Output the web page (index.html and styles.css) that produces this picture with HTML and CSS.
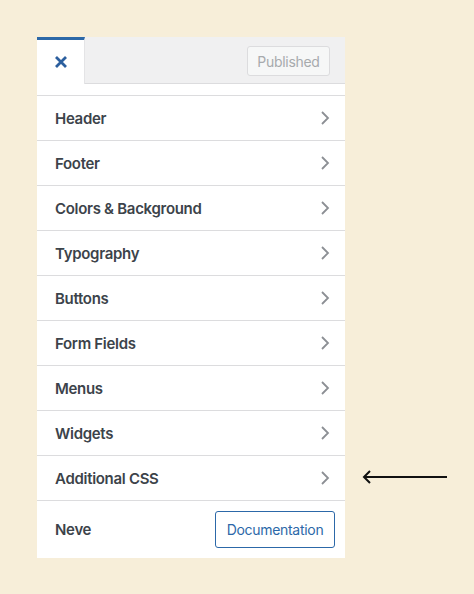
FILE: index.html
```html
<!DOCTYPE html>
<html>
<head>
<meta charset="utf-8">
<link rel="stylesheet" href="styles.css">
</head>
<body>
<div class="stage">
  <div class="panel">
    <div class="topbar">
      <div class="close-tab">
        <svg width="14" height="14" viewBox="0 0 14 14"><path d="M2 2 L12 12 M12 2 L2 12" stroke="#2c5f9e" stroke-width="2.8" stroke-linecap="butt"/></svg>
      </div>
      <div class="published">Published</div>
    </div>
    <div class="spacer"></div>
    <ul class="menu">
      <li class="item"><span>Header</span><svg class="chev" width="10" height="16" viewBox="0 0 10 16"><path d="M2 2 L8 8 L2 14" fill="none" stroke="#8c8f94" stroke-width="1.8"/></svg></li>
      <li class="item"><span>Footer</span><svg class="chev" width="10" height="16" viewBox="0 0 10 16"><path d="M2 2 L8 8 L2 14" fill="none" stroke="#8c8f94" stroke-width="1.8"/></svg></li>
      <li class="item"><span>Colors &amp; Background</span><svg class="chev" width="10" height="16" viewBox="0 0 10 16"><path d="M2 2 L8 8 L2 14" fill="none" stroke="#8c8f94" stroke-width="1.8"/></svg></li>
      <li class="item"><span>Typography</span><svg class="chev" width="10" height="16" viewBox="0 0 10 16"><path d="M2 2 L8 8 L2 14" fill="none" stroke="#8c8f94" stroke-width="1.8"/></svg></li>
      <li class="item"><span>Buttons</span><svg class="chev" width="10" height="16" viewBox="0 0 10 16"><path d="M2 2 L8 8 L2 14" fill="none" stroke="#8c8f94" stroke-width="1.8"/></svg></li>
      <li class="item"><span>Form Fields</span><svg class="chev" width="10" height="16" viewBox="0 0 10 16"><path d="M2 2 L8 8 L2 14" fill="none" stroke="#8c8f94" stroke-width="1.8"/></svg></li>
      <li class="item"><span>Menus</span><svg class="chev" width="10" height="16" viewBox="0 0 10 16"><path d="M2 2 L8 8 L2 14" fill="none" stroke="#8c8f94" stroke-width="1.8"/></svg></li>
      <li class="item"><span>Widgets</span><svg class="chev" width="10" height="16" viewBox="0 0 10 16"><path d="M2 2 L8 8 L2 14" fill="none" stroke="#8c8f94" stroke-width="1.8"/></svg></li>
      <li class="item"><span>Additional CSS</span><svg class="chev" width="10" height="16" viewBox="0 0 10 16"><path d="M2 2 L8 8 L2 14" fill="none" stroke="#8c8f94" stroke-width="1.8"/></svg></li>
    </ul>
    <div class="footer">
      <span>Neve</span>
      <div class="doc-btn">Documentation</div>
    </div>
  </div>
  <svg class="arrow" width="90" height="14" viewBox="0 0 90 14"><path d="M3 7 H86 M9 1 L3 7 L9 13" fill="none" stroke="#111" stroke-width="2"/></svg>
</div>
</body>
</html>
```

FILE: styles.css
```css
html, body {
  margin: 0;
  padding: 0;
  background: #f7eed9;
}
body {
  width: 474px;
  height: 594px;
  font-family: "Inter", "Liberation Sans", sans-serif;
}
.stage {
  position: relative;
  padding: 37px 0 0 37px;
}
.panel {
  width: 308px;
  background: #fff;
}
.topbar {
  height: 46px;
  background: #f0f0f1;
  border-bottom: 1px solid #dcdcde;
  display: flex;
  align-items: center;
  justify-content: space-between;
}
.close-tab {
  width: 48px;
  margin-bottom: -1px;
  align-self: flex-end;
  background: #fff;
  border-top: 3px solid #2c68a8;
  display: flex;
  align-items: center;
  justify-content: center;
  box-sizing: border-box;
  height: 47px;
  border-right: 1px solid #e4e4e6;
}
.published {
  margin-right: 15px;
  width: 83px;
  height: 30px;
  box-sizing: border-box;
  border: 1px solid #dcdcde;
  border-radius: 3px;
  background: #f6f7f7;
  color: #a7aaad;
  font-size: 14px;
  letter-spacing: -0.3px;
  display: flex;
  align-items: center;
  justify-content: center;
  margin-top: 2px;
}
.spacer {
  height: 11px;
}
.menu {
  list-style: none;
  margin: 0;
  padding: 0;
  border-top: 1px solid #dcdcde;
}
.item {
  height: 44px;
  border-bottom: 1px solid #dcdcde;
  display: flex;
  align-items: center;
  justify-content: space-between;
  padding: 0 15px 0 18px;
  color: #3c434a;
  font-size: 15px;
  font-weight: 600;
  letter-spacing: -0.3px;
}
.chev {
  display: block;
}
.footer {
  height: 57px;
  display: flex;
  align-items: center;
  justify-content: space-between;
  padding: 0 10px 0 18px;
  color: #3c434a;
  font-size: 15px;
  font-weight: 600;
  letter-spacing: -0.3px;
}
.doc-btn {
  width: 120px;
  height: 37px;
  box-sizing: border-box;
  border: 1px solid #2c68a8;
  border-radius: 3px;
  color: #2c68a8;
  font-size: 14px;
  font-weight: 400;
  letter-spacing: -0.3px;
  display: flex;
  align-items: center;
  justify-content: center;
}
.arrow {
  position: absolute;
  left: 361px;
  top: 470px;
}
```
